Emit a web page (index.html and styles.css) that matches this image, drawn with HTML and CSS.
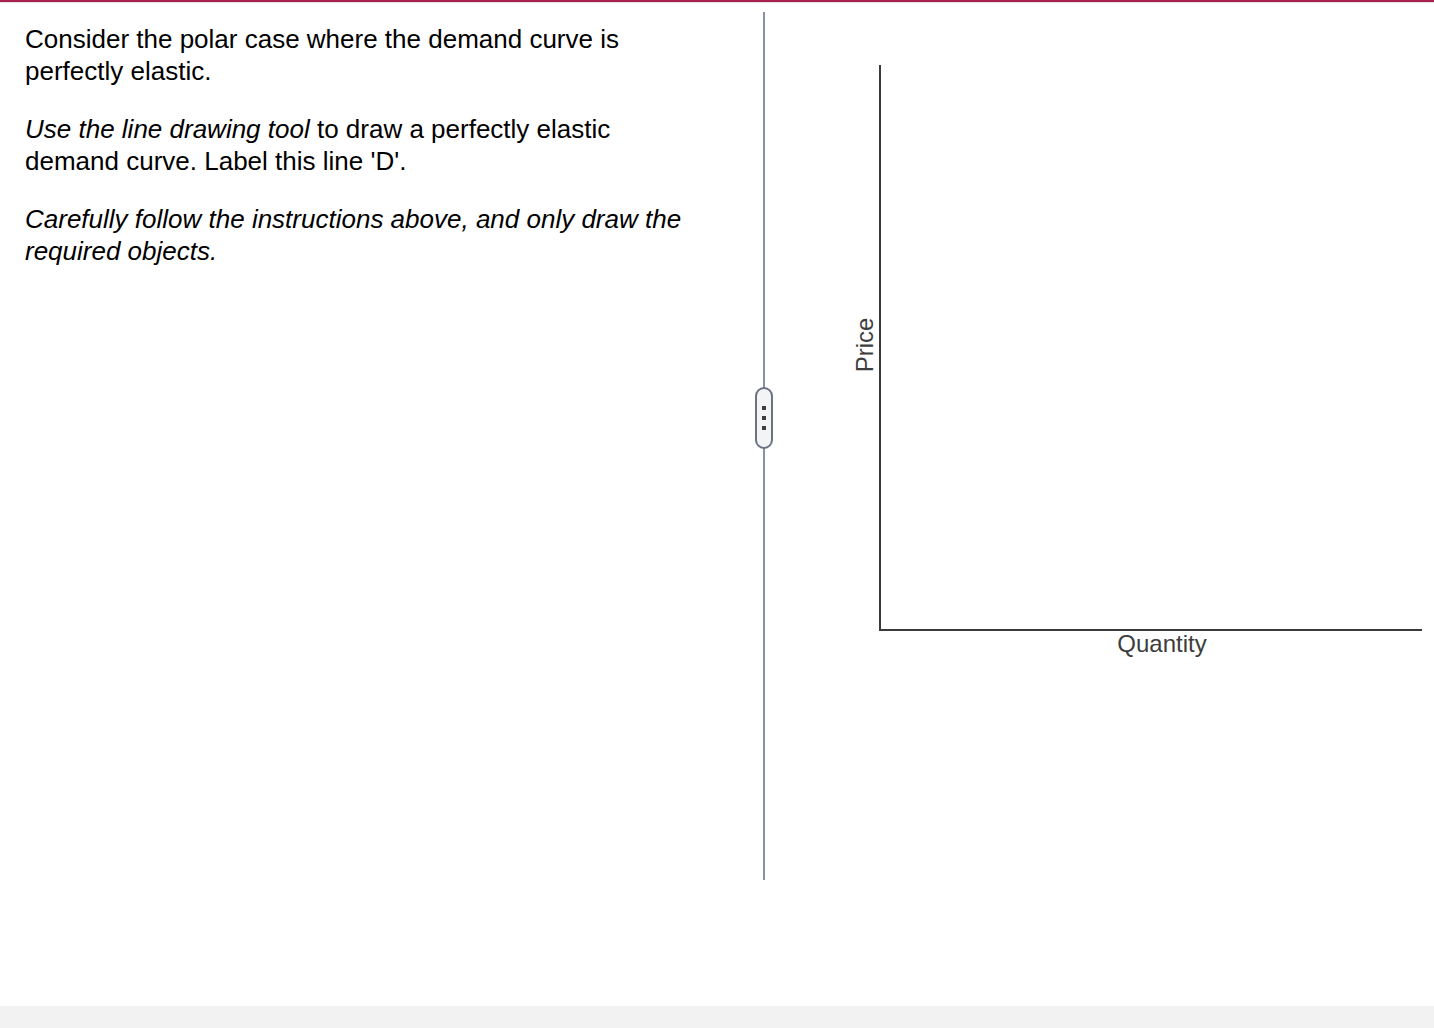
FILE: index.html
```html
<!DOCTYPE html>
<html>
<head>
<meta charset="utf-8">
<link rel="stylesheet" href="styles.css">
</head>
<body>
<div class="topbar"></div>
<div class="main">
  <div class="left">
    <p>Consider the polar case where the demand curve is perfectly elastic.</p>
    <p><em>Use the line drawing tool</em> to draw a perfectly elastic demand curve. Label this line 'D'.</p>
    <p><em>Carefully follow the instructions above, and only draw the required objects.</em></p>
  </div>
  <div class="divider">
    <div class="rule"></div>
    <div class="handle"><span></span><span></span><span></span></div>
  </div>
  <div class="right">
    <svg class="chart" width="661" height="1003" viewBox="0 0 661 1003">
      <line x1="107" y1="62" x2="107" y2="628" stroke="#3a3a3a" stroke-width="2"/>
      <line x1="106" y1="627" x2="649" y2="627" stroke="#3a3a3a" stroke-width="2"/>
      <text class="axis" x="0" y="0" transform="translate(100 342) rotate(-90)" text-anchor="middle">Price</text>
      <text class="axis" x="389" y="649" text-anchor="middle">Quantity</text>
    </svg>
  </div>
</div>
<div class="footer"></div>
</body>
</html>
```
FILE: styles.css
```css
html, body {
  margin: 0;
  padding: 0;
  background: #ffffff;
  font-family: "Liberation Sans", Arial, sans-serif;
  overflow: hidden;
}
.topbar {
  height: 2px;
  background: #a8214b;
  border-bottom: 1px solid #e2e2e6;
}
.main {
  display: flex;
  height: 1003px;
}
.left {
  flex: 0 0 auto;
  width: 730px;
  padding: 20px 0 0 25px;
  color: #000;
  font-size: 26px;
  line-height: 32px;
}
.left p {
  margin: 0 0 26px 0;
  max-width: 680px;
}
.left p:first-child { max-width: 640px; }
.left p:nth-child(2) { max-width: 640px; }
.divider {
  flex: 0 0 18px;
  position: relative;
  display: flex;
  justify-content: center;
}
.rule {
  margin-top: 9px;
  width: 2px;
  height: 868px;
  background: #8a92a2;
}
.handle {
  position: absolute;
  left: 0;
  top: 384px;
  width: 14px;
  height: 58px;
  border: 2px solid #6b7383;
  border-radius: 9px;
  background: #f3f4f6;
  display: flex;
  flex-direction: column;
  align-items: center;
  justify-content: center;
  gap: 6px;
}
.handle span {
  width: 4px;
  height: 4px;
  background: #3f3f3f;
}
.right {
  flex: 1 1 auto;
  overflow: hidden;
}
.chart {
  display: block;
}
.axis {
  font-family: "Liberation Sans", Arial, sans-serif;
  font-size: 24px;
  fill: #3d3d3d;
}
.footer {
  height: 22px;
  background: #f2f2f2;
}
```
